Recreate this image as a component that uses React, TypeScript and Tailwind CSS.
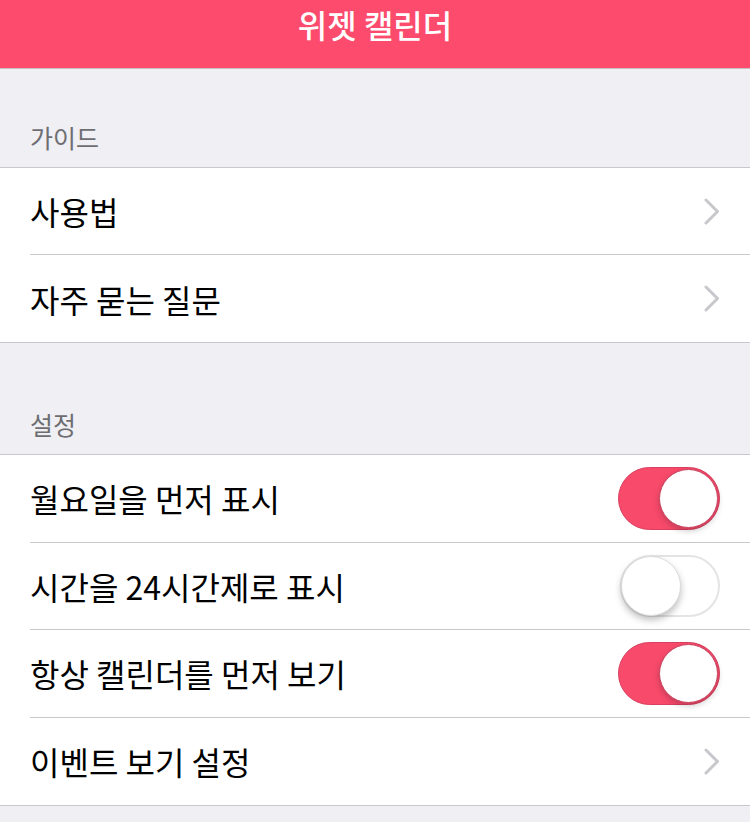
import React from 'react';

type Row =
  | { label: string; kind: 'link' }
  | { label: string; kind: 'toggle'; on: boolean };

const guideRows: Row[] = [
  { label: '사용법', kind: 'link' },
  { label: '자주 묻는 질문', kind: 'link' }
];

const settingRows: Row[] = [
  { label: '월요일을 먼저 표시', kind: 'toggle', on: true },
  { label: '시간을 24시간제로 표시', kind: 'toggle', on: false },
  { label: '항상 캘린더를 먼저 보기', kind: 'toggle', on: true },
  { label: '이벤트 보기 설정', kind: 'link' }
];

const Chevron = () => (
  <svg width="16" height="27" viewBox="0 0 16 27" fill="none">
    <path d="M2 2l11.5 11.5L2 25" stroke="#c7c7cc" strokeWidth="3" strokeLinecap="round" strokeLinejoin="round" />
  </svg>
);

const Toggle = ({ on }: { on: boolean }) =>
  on ? (
    <div className="relative h-[63px] w-[102px] rounded-full bg-[#f84a6b] border border-[#d9405f]">
      <div className="absolute right-[1px] top-[1px] h-[59px] w-[59px] rounded-full bg-white border border-[#c94460] shadow-[0_3px_6px_rgba(0,0,0,0.2)]" />
    </div>
  ) : (
    <div className="relative h-[62px] w-[100px] rounded-full bg-white border-2 border-[#e4e4e4]">
      <div className="absolute left-[-1px] top-[-1px] h-[60px] w-[60px] rounded-full bg-white border border-[#dcdcdc] shadow-[0_4px_7px_rgba(0,0,0,0.25)]" />
    </div>
  );

const Group = ({ rows, rowHeight }: { rows: Row[]; rowHeight: string }) => (
  <div className="bg-white border-y border-[#c8c7cc]">
    {rows.map((row, index) => (
      <div key={index} className="pl-[30px]">
        <div
          className={`flex ${rowHeight} items-center justify-between pr-[30px] ${
            index < rows.length - 1 ? 'border-b border-[#c8c7cc]' : ''
          }`}
        >
          <span className="text-[32px] text-black leading-none">{row.label}</span>
          {row.kind === 'link' ? <Chevron /> : <Toggle on={row.on} />}
        </div>
      </div>
    ))}
  </div>
);

export default function App() {
  return (
    <div
      className="h-[822px] w-[750px] overflow-hidden bg-[#efeff4]"
      style={{ fontFamily: '"Noto Sans CJK KR", "Noto Sans", sans-serif' }}
    >
      <header className="flex h-[69px] justify-center bg-[#fc4b6c] border-b border-[#c9c0c4] pt-[3px]">
        <h1 className="text-[32px] font-medium text-white leading-[42px]">위젯 캘린더</h1>
      </header>

      <div className="pt-[53px] pb-[15px] pl-[30px] text-[25px] leading-[30px] text-[#6d6d72]">가이드</div>
      <Group rows={guideRows} rowHeight="h-[87px]" />

      <div className="pt-[66px] pb-[15px] pl-[30px] text-[25px] leading-[30px] text-[#6d6d72]">설정</div>
      <Group rows={settingRows} rowHeight="h-[87.5px]" />
    </div>
  );
}
